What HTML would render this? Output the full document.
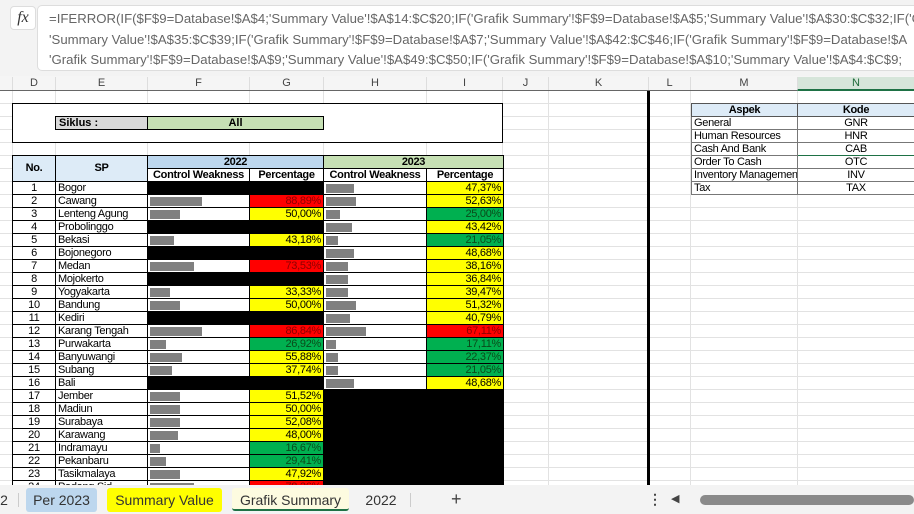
<!DOCTYPE html>
<html><head><meta charset="utf-8"><style>
*{margin:0;padding:0;box-sizing:border-box}
body{width:914px;height:514px;overflow:hidden;background:#fff;position:relative;font-family:"Liberation Sans Narrow","Liberation Sans",sans-serif}
.fb{position:absolute;left:0;top:0;width:914px;height:76px;background:#f3f3f3}
.fx{position:absolute;left:10px;top:6px;width:26px;height:24px;background:#fff;border:1px solid #ddd;border-radius:4px;font-family:"Liberation Serif",serif;font-style:italic;font-size:16px;text-align:center;line-height:22px;color:#333}
.fbox{position:absolute;left:37px;top:5px;width:890px;height:66px;background:#fff;border:1px solid #ddd;border-radius:5px;font-family:"Liberation Sans",sans-serif;font-size:13.2px;color:#666;padding:3px 0 0 11px;line-height:20.5px;white-space:nowrap;overflow:hidden}
.ch{position:absolute;top:76px;height:15px;background:#f5f5f5;border-bottom:1px solid #666;width:914px;left:0;font-family:"Liberation Sans",sans-serif;font-size:11px;color:#444}
.ch span{position:absolute;top:1px;text-align:center;border-left:1px solid #ddd;height:13px}
.grid{position:absolute;left:0;top:91px;width:914px;height:394px;background:repeating-linear-gradient(to bottom,transparent 0,transparent 12px,#e2e2e2 12px,#e2e2e2 13px)}
.vl{position:absolute;top:91px;height:394px;width:1px;background:#e2e2e2}
.a{position:absolute}
table{border-collapse:collapse;position:absolute;table-layout:fixed}
td{height:13px;border:1px solid #000;font-size:11px;line-height:11px;padding:0 2px;white-space:nowrap;overflow:hidden;letter-spacing:-0.3px;position:relative}
.c{text-align:center}.r{text-align:right}
.k{background:#000}.y{background:#ffff00}.rd{background:#ff0000;color:#8b0000}.g{background:#00b050;color:#0a4a1a}
.bar{position:absolute;left:2px;top:2px;height:9px;background:#808080}
.tabs{position:absolute;left:0;top:485px;width:914px;height:29px;background:#f3f3f3;font-family:"Liberation Sans Narrow","Liberation Sans",sans-serif;font-size:14px;color:#333}
.tab{position:absolute;top:3px;height:24px;line-height:24px;border-radius:3px;white-space:nowrap;text-align:center}
</style></head><body>
<div class="fb"><div class="fx">fx</div>
<div class="fbox">=IFERROR(IF($F$9=Database!$A$4;'Summary Value'!$A$14:$C$20;IF('Grafik Summary'!$F$9=Database!$A$5;'Summary Value'!$A$30:$C$32;IF('Grafik<br>'Summary Value'!$A$35:$C$39;IF('Grafik Summary'!$F$9=Database!$A$7;'Summary Value'!$A$42:$C$46;IF('Grafik Summary'!$F$9=Database!$A<br>'Grafik Summary'!$F$9=Database!$A$9;'Summary Value'!$A$49:$C$50;IF('Grafik Summary'!$F$9=Database!$A$10;'Summary Value'!$A$4:$C$9;</div></div>
<div class="ch">
<span style="left:12px;width:43px">D</span><span style="left:55px;width:92px">E</span><span style="left:147px;width:102px">F</span><span style="left:249px;width:74px">G</span><span style="left:323px;width:103px">H</span><span style="left:426px;width:76px">I</span><span style="left:502px;width:46px">J</span><span style="left:548px;width:100px">K</span><span style="left:648px;width:42px">L</span><span style="left:690px;width:107px">M</span><span style="left:797px;width:117px;background:#d6e5da;color:#1e6b3a;border-bottom:2px solid #1e7145;height:14px">N</span>
</div>
<div class="grid"></div>
<div class="vl" style="left:12px"></div><div class="vl" style="left:55px"></div><div class="vl" style="left:147px"></div><div class="vl" style="left:249px"></div><div class="vl" style="left:323px"></div><div class="vl" style="left:426px"></div><div class="vl" style="left:502px"></div><div class="vl" style="left:548px"></div><div class="vl" style="left:690px"></div><div class="vl" style="left:797px"></div>
<div class="a" style="left:647px;top:91px;width:3px;height:394px;background:#000"></div>

<div class="a" style="left:12px;top:103px;width:491px;height:40px;border:1px solid #000;background:#fff"></div>
<div class="a" style="left:55px;top:116px;width:93px;height:14px;border:1px solid #000;background:#d9d9d9;font-size:11px;font-weight:bold;padding-left:3px;line-height:12px">Siklus :</div>
<div class="a" style="left:147px;top:116px;width:177px;height:14px;border:1px solid #000;background:#c6e0b4;font-size:11px;font-weight:bold;text-align:center;line-height:12px">All</div>

<table style="left:12px;top:155px;width:491px">
<colgroup><col style="width:43px"><col style="width:92px"><col style="width:102px"><col style="width:74px"><col style="width:103px"><col style="width:77px"></colgroup>
<tr><td rowspan="2" class="c" style="background:#ddebf7;font-weight:bold;height:26px">No.</td><td rowspan="2" class="c" style="background:#ddebf7;font-weight:bold">SP</td><td colspan="2" class="c" style="background:#bdd7ee;font-weight:bold">2022</td><td colspan="2" class="c" style="background:#c6e0b4;font-weight:bold">2023</td></tr>
<tr><td class="c" style="font-weight:bold">Control Weakness</td><td class="c" style="font-weight:bold">Percentage</td><td class="c" style="font-weight:bold">Control Weakness</td><td class="c" style="font-weight:bold">Percentage</td></tr>
<tr><td class="c">1</td><td>Bogor</td><td class="k"></td><td class="k"></td><td><i class="bar" style="width:28px"></i></td><td class="r y">47,37%</td></tr>
<tr><td class="c">2</td><td>Cawang</td><td><i class="bar" style="width:52px"></i></td><td class="r rd">88,89%</td><td><i class="bar" style="width:30px"></i></td><td class="r y">52,63%</td></tr>
<tr><td class="c">3</td><td>Lenteng Agung</td><td><i class="bar" style="width:30px"></i></td><td class="r y">50,00%</td><td><i class="bar" style="width:14px"></i></td><td class="r g">25,00%</td></tr>
<tr><td class="c">4</td><td>Probolinggo</td><td class="k"></td><td class="k"></td><td><i class="bar" style="width:26px"></i></td><td class="r y">43,42%</td></tr>
<tr><td class="c">5</td><td>Bekasi</td><td><i class="bar" style="width:24px"></i></td><td class="r y">43,18%</td><td><i class="bar" style="width:12px"></i></td><td class="r g">21,05%</td></tr>
<tr><td class="c">6</td><td>Bojonegoro</td><td class="k"></td><td class="k"></td><td><i class="bar" style="width:28px"></i></td><td class="r y">48,68%</td></tr>
<tr><td class="c">7</td><td>Medan</td><td><i class="bar" style="width:44px"></i></td><td class="r rd">73,53%</td><td><i class="bar" style="width:22px"></i></td><td class="r y">38,16%</td></tr>
<tr><td class="c">8</td><td>Mojokerto</td><td class="k"></td><td class="k"></td><td><i class="bar" style="width:22px"></i></td><td class="r y">36,84%</td></tr>
<tr><td class="c">9</td><td>Yogyakarta</td><td><i class="bar" style="width:20px"></i></td><td class="r y">33,33%</td><td><i class="bar" style="width:22px"></i></td><td class="r y">39,47%</td></tr>
<tr><td class="c">10</td><td>Bandung</td><td><i class="bar" style="width:30px"></i></td><td class="r y">50,00%</td><td><i class="bar" style="width:30px"></i></td><td class="r y">51,32%</td></tr>
<tr><td class="c">11</td><td>Kediri</td><td class="k"></td><td class="k"></td><td><i class="bar" style="width:24px"></i></td><td class="r y">40,79%</td></tr>
<tr><td class="c">12</td><td>Karang Tengah</td><td><i class="bar" style="width:52px"></i></td><td class="r rd">86,84%</td><td><i class="bar" style="width:40px"></i></td><td class="r rd">67,11%</td></tr>
<tr><td class="c">13</td><td>Purwakarta</td><td><i class="bar" style="width:16px"></i></td><td class="r g">26,92%</td><td><i class="bar" style="width:10px"></i></td><td class="r g">17,11%</td></tr>
<tr><td class="c">14</td><td>Banyuwangi</td><td><i class="bar" style="width:32px"></i></td><td class="r y">55,88%</td><td><i class="bar" style="width:12px"></i></td><td class="r g">22,37%</td></tr>
<tr><td class="c">15</td><td>Subang</td><td><i class="bar" style="width:22px"></i></td><td class="r y">37,74%</td><td><i class="bar" style="width:12px"></i></td><td class="r g">21,05%</td></tr>
<tr><td class="c">16</td><td>Bali</td><td class="k"></td><td class="k"></td><td><i class="bar" style="width:28px"></i></td><td class="r y">48,68%</td></tr>
<tr><td class="c">17</td><td>Jember</td><td><i class="bar" style="width:30px"></i></td><td class="r y">51,52%</td><td class="k"></td><td class="k"></td></tr>
<tr><td class="c">18</td><td>Madiun</td><td><i class="bar" style="width:30px"></i></td><td class="r y">50,00%</td><td class="k"></td><td class="k"></td></tr>
<tr><td class="c">19</td><td>Surabaya</td><td><i class="bar" style="width:30px"></i></td><td class="r y">52,08%</td><td class="k"></td><td class="k"></td></tr>
<tr><td class="c">20</td><td>Karawang</td><td><i class="bar" style="width:28px"></i></td><td class="r y">48,00%</td><td class="k"></td><td class="k"></td></tr>
<tr><td class="c">21</td><td>Indramayu</td><td><i class="bar" style="width:10px"></i></td><td class="r g">16,67%</td><td class="k"></td><td class="k"></td></tr>
<tr><td class="c">22</td><td>Pekanbaru</td><td><i class="bar" style="width:16px"></i></td><td class="r g">29,41%</td><td class="k"></td><td class="k"></td></tr>
<tr><td class="c">23</td><td>Tasikmalaya</td><td><i class="bar" style="width:30px"></i></td><td class="r y">47,92%</td><td class="k"></td><td class="k"></td></tr>
<tr><td class="c">24</td><td>Padang Sid</td><td><i class="bar" style="width:44px"></i></td><td class="r rd">78,26%</td><td class="k"></td><td class="k"></td></tr>
</table>

<table style="left:691px;top:103px;width:223px">
<colgroup><col style="width:106px"><col style="width:117px"></colgroup>
<tr><td class="c" style="background:#ddebf7;font-weight:bold;border-color:#555">Aspek</td><td class="c" style="background:#ddebf7;font-weight:bold;border-color:#555">Kode</td></tr>
<tr><td style="border-color:#777">General</td><td class="c" style="border-color:#777">GNR</td></tr>
<tr><td style="border-color:#777">Human Resources</td><td class="c" style="border-color:#777">HNR</td></tr>
<tr><td style="border-color:#777">Cash And Bank</td><td class="c" style="border:1px solid #1e7145">CAB</td></tr>
<tr><td style="border-color:#777">Order To Cash</td><td class="c" style="border-color:#777">OTC</td></tr>
<tr><td style="border-color:#777">Inventory Managemen</td><td class="c" style="border-color:#777">INV</td></tr>
<tr><td style="border-color:#777">Tax</td><td class="c" style="border-color:#777">TAX</td></tr>
</table>

<div class="tabs">
<div class="tab" style="left:0;width:8px">2</div>
<div class="a" style="left:18px;top:8px;width:1px;height:14px;background:#ccc"></div>
<div class="tab" style="left:26px;width:71px;background:#bdd7ee">Per 2023</div>
<div class="tab" style="left:107px;width:115px;background:#ffff00">Summary Value</div>
<div class="tab" style="left:232px;width:117px;background:#fdfbe0;border-bottom:2px solid #1e7145;height:23px">Grafik Summary</div>
<div class="tab" style="left:358px;width:46px">2022</div>
<div class="a" style="left:410px;top:8px;width:1px;height:14px;background:#ccc"></div>
<div class="a" style="left:451px;top:4px;font-size:18px;color:#444">+</div>
<div class="a" style="left:648px;top:6px;font-size:14px;color:#444;font-weight:bold">⋮</div>
<div class="a" style="left:671px;top:7px;font-size:11px;color:#444">◀</div>
<div class="a" style="left:700px;top:10px;width:214px;height:10px;background:#8a8a8a;border-radius:5px"></div>
</div>
</body></html>
